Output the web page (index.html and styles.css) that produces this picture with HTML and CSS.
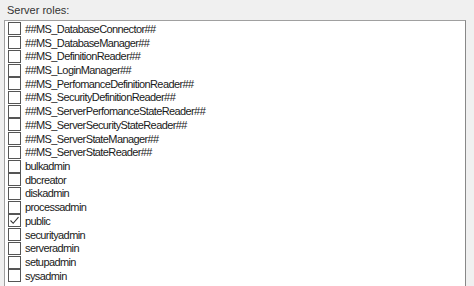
FILE: index.html
```html
<html lang="en">
<head>
  <meta charset="UTF-8">
  <title>Server roles</title>
  <link rel="stylesheet" href="styles.css">
</head>
<body>
  <div class="panel">
    <div class="label">Server roles:</div>
    <div class="listbox">
      <div class="item"><span class="check"></span>##MS_DatabaseConnector##</div>
      <div class="item"><span class="check"></span>##MS_DatabaseManager##</div>
      <div class="item"><span class="check"></span>##MS_DefinitionReader##</div>
      <div class="item"><span class="check"></span>##MS_LoginManager##</div>
      <div class="item"><span class="check"></span>##MS_PerfomanceDefinitionReader##</div>
      <div class="item"><span class="check"></span>##MS_SecurityDefinitionReader##</div>
      <div class="item"><span class="check"></span>##MS_ServerPerfomanceStateReader##</div>
      <div class="item"><span class="check"></span>##MS_ServerSecurityStateReader##</div>
      <div class="item"><span class="check"></span>##MS_ServerStateManager##</div>
      <div class="item"><span class="check"></span>##MS_ServerStateReader##</div>
      <div class="item"><span class="check"></span>bulkadmin</div>
      <div class="item"><span class="check"></span>dbcreator</div>
      <div class="item"><span class="check"></span>diskadmin</div>
      <div class="item"><span class="check"></span>processadmin</div>
      <div class="item"><span class="check checked"><svg width="11" height="11" viewBox="0 0 11 11"><path d="M1.5 5.5 L4.2 8.3 L9.5 2.2" fill="none" stroke="#333" stroke-width="1.1"/></svg></span>public</div>
      <div class="item"><span class="check"></span>securityadmin</div>
      <div class="item"><span class="check"></span>serveradmin</div>
      <div class="item"><span class="check"></span>setupadmin</div>
      <div class="item"><span class="check"></span>sysadmin</div>
    </div>
  </div>
</body>
</html>
```

FILE: styles.css
```css
body {
  margin: 0;
  height: 286px;
  background: #f0f0f0;
  font-family: "Liberation Sans", Arial, sans-serif;
  font-size: 11px;
  color: #1a1a1a;
  overflow: hidden;
}

.panel {
  padding: 5px 0 0 4px;
}

.label {
  padding-left: 3px;
  height: 15px;
  line-height: 11px;
  color: #333;
}

.listbox {
  width: 462px;
  height: 266px;
  background: #fff;
  border: 1px solid #a0a0a0;
  border-right-color: #888;
  border-bottom: none;
  padding: 1px 0 0 3px;
  box-sizing: border-box;
  overflow: hidden;
}

.item {
  display: flex;
  align-items: center;
  height: 13.72px;
  white-space: nowrap;
  letter-spacing: -0.6px;
}

.check {
  width: 11px;
  height: 11px;
  border: 1px solid #555;
  background: #fff;
  margin-right: 4px;
  flex-shrink: 0;
  display: flex;
}
```
